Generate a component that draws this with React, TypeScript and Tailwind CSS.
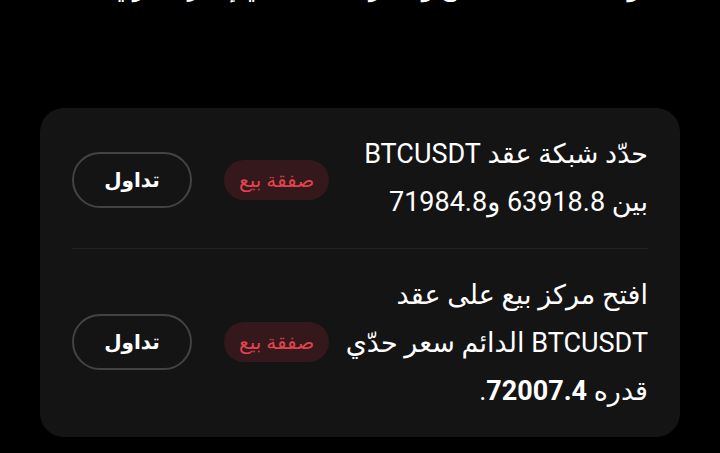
import React from "react";

const font = { fontFamily: '"Roboto", "DejaVu Sans", "Noto Sans", sans-serif' };

function Row({ lines, offset }: { lines: React.ReactNode[]; offset: string }) {
  return (
    <div className="flex items-center py-[22px]">
      <div className="flex-1 min-w-0 text-white text-[27px] leading-[48px] text-right">
        {lines.map((l, i) => (
          <div key={i} className="whitespace-nowrap">
            {l}
          </div>
        ))}
      </div>
      <div className={`ms-[17px] h-[40px] px-[15px] rounded-full bg-[#34181b] text-[#e0434f] text-[20px] flex items-center whitespace-nowrap ${offset}`}>
        صفقة بيع
      </div>
      <button className={`ms-[32px] w-[120px] h-[56px] rounded-full border-2 border-[#434343] text-white text-[20px] font-bold flex items-center justify-center ${offset}`}>
        تداول
      </button>
    </div>
  );
}

export default function App() {
  return (
    <div dir="rtl" style={font} className="w-[720px] h-[453px] bg-black overflow-hidden">
      <p className="text-white text-[26px] leading-[48px] mt-[-37px] h-[48px] px-[80px] text-right whitespace-nowrap overflow-hidden">
        وتنفيذ عمليات البيع والشراء تلقائيًا في إطار سعري.
      </p>
      <div className="mx-[40px] mt-[97px] rounded-[24px] bg-[#141414] px-[32px]">
        <Row
          offset="mt-[4px]"
          lines={[
            "حدّد شبكة عقد BTCUSDT",
            "بين 63918.8 و71984.8",
          ]}
        />
        <div className="h-px bg-[#242424]" />
        <Row
          offset="mt-[-2px]"
          lines={[
            "افتح مركز بيع على عقد",
            "BTCUSDT الدائم سعر حدّي",
            <>
              قدره <span className="font-bold">72007.4</span>.
            </>,
          ]}
        />
      </div>
    </div>
  );
}
